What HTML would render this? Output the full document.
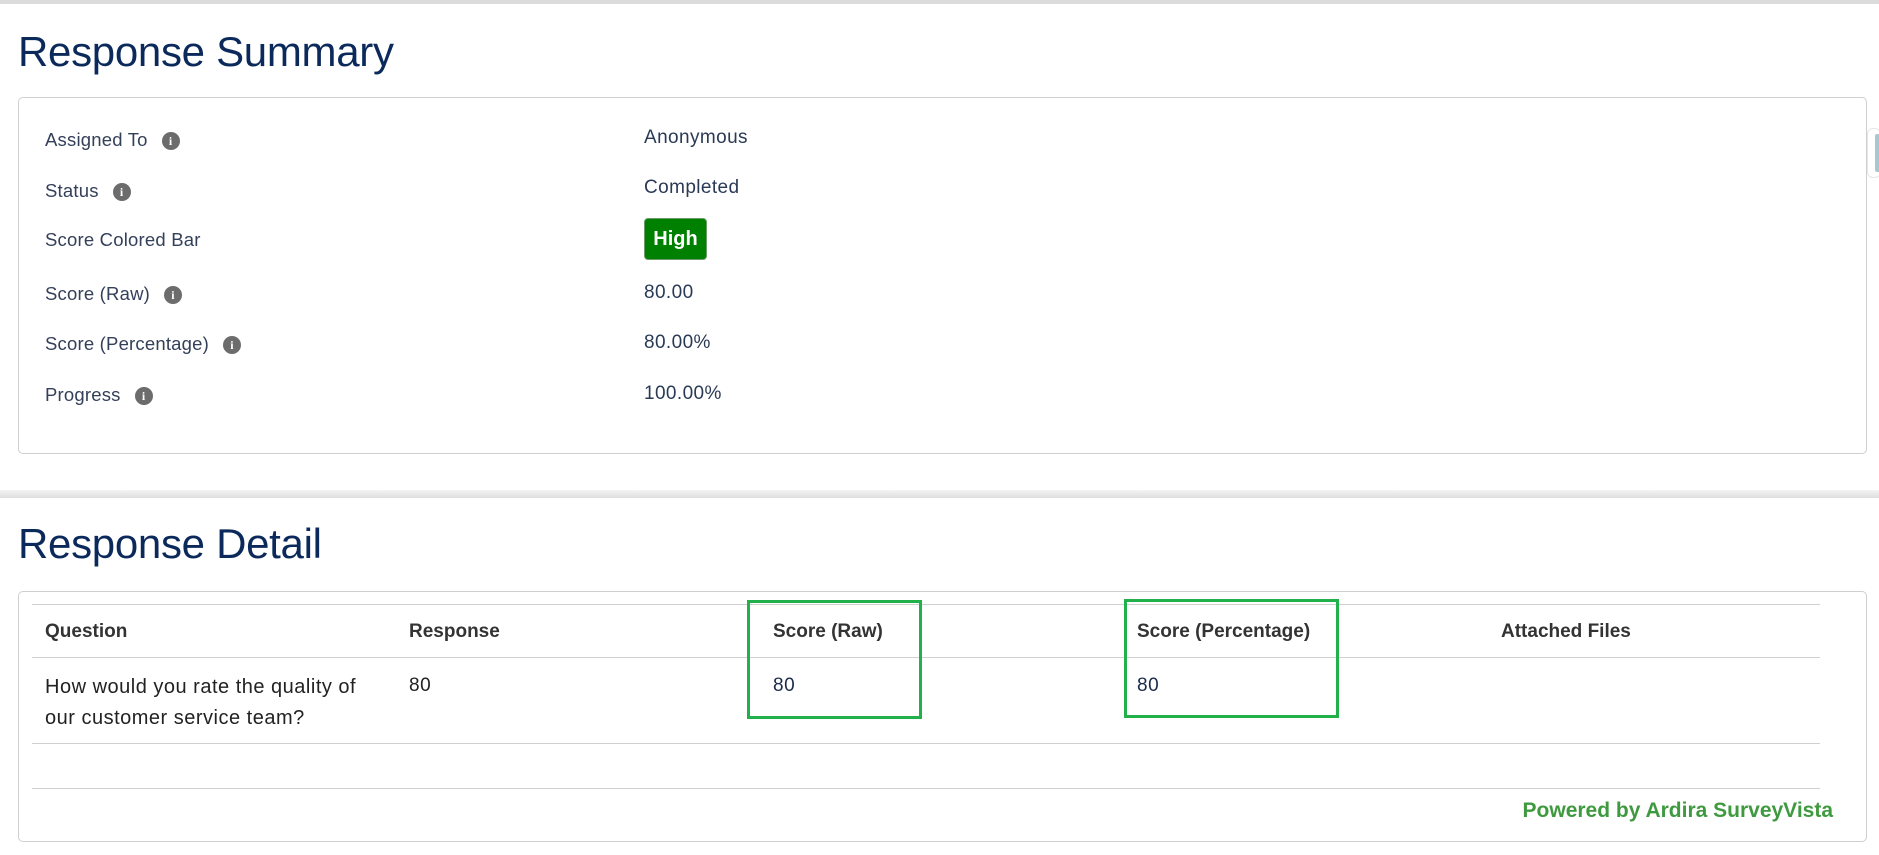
<!DOCTYPE html>
<html><head><meta charset="utf-8"><style>
*{margin:0;padding:0;box-sizing:border-box}
body{width:1879px;height:855px;background:#fff;font-family:"Liberation Sans",sans-serif;position:relative;overflow:hidden;color:#333}
.a{position:absolute;white-space:nowrap}
.t{font-size:42px;color:#0b2a5b;letter-spacing:-0.3px}
.card{position:absolute;border:1px solid #cfcfcf;border-radius:5px}
.l{font-size:18.5px;color:#34405a;letter-spacing:0.2px}
.v{font-size:19px;color:#2a3a55;letter-spacing:0.4px}
.i{display:inline-block;width:18px;height:18px;border-radius:50%;background:#6c6c6c;color:#fff;font-size:12px;font-weight:bold;text-align:center;line-height:18px;font-family:"Liberation Serif",serif;vertical-align:middle;margin-left:14px}
.h{position:absolute;height:1px;background:#d0d0d0;left:32px;width:1788px}
.th{font-size:19px;font-weight:bold;color:#333}
.td{font-size:19px;color:#222;letter-spacing:0.5px}
.g{position:absolute;border:3px solid #22b04b}
</style></head><body>
<div class="a" style="left:0;top:0;width:1879px;height:4px;background:#dcdcdc"></div>
<div class="a t" style="left:18px;top:28px">Response Summary</div>
<div class="card" style="left:18px;top:97px;width:1849px;height:357px"></div>
<div class="a l" style="left:45px;top:129px">Assigned To<span class="i">i</span></div>
<div class="a l" style="left:45px;top:180px">Status<span class="i">i</span></div>
<div class="a l" style="left:45px;top:229px">Score Colored Bar</div>
<div class="a l" style="left:45px;top:283px">Score (Raw)<span class="i">i</span></div>
<div class="a l" style="left:45px;top:333px">Score (Percentage)<span class="i">i</span></div>
<div class="a l" style="left:45px;top:384px">Progress<span class="i">i</span></div>
<div class="a v" style="left:644px;top:127px">Anonymous</div>
<div class="a v" style="left:644px;top:177px">Completed</div>
<div class="a" style="left:644px;top:218px;width:63px;height:42px;background:#008000;border:1px solid #6a9a6a;border-radius:4px;color:#fff;font-weight:bold;font-size:20px;text-align:center;line-height:40px">High</div>
<div class="a v" style="left:644px;top:282px">80.00</div>
<div class="a v" style="left:644px;top:332px">80.00%</div>
<div class="a v" style="left:644px;top:383px">100.00%</div>
<div class="a" style="left:1867px;top:128px;width:14px;height:50px;border:1px solid #e6e6e6;border-radius:6px;background:#fff"></div>
<div class="a" style="left:1875px;top:134px;width:6px;height:38px;background:#a8c8d0;border-radius:2px"></div>
<div class="a" style="left:0;top:490px;width:1879px;height:8px;background:linear-gradient(#f4f4f4,#dedede)"></div>
<div class="a t" style="left:18px;top:520px">Response Detail</div>
<div class="card" style="left:18px;top:591px;width:1849px;height:251px"></div>
<div class="h" style="top:604px"></div>
<div class="h" style="top:657px"></div>
<div class="h" style="top:743px"></div>
<div class="h" style="top:788px"></div>
<div class="a th" style="left:45px;top:621px">Question</div>
<div class="a th" style="left:409px;top:621px">Response</div>
<div class="a th" style="left:773px;top:621px">Score (Raw)</div>
<div class="a th" style="left:1137px;top:621px">Score (Percentage)</div>
<div class="a th" style="left:1501px;top:621px">Attached Files</div>
<div class="a td" style="left:45px;top:672px;line-height:31px;font-size:20px">How would you rate the quality of<br>our customer service team?</div>
<div class="a td" style="left:409px;top:675px">80</div>
<div class="a td" style="left:773px;top:675px;color:#1c2b4a">80</div>
<div class="a td" style="left:1137px;top:675px;color:#1c2b4a">80</div>
<div class="g" style="left:747px;top:600px;width:175px;height:119px"></div>
<div class="g" style="left:1124px;top:599px;width:215px;height:119px"></div>
<div class="a" style="right:46px;top:799px;font-size:21px;font-weight:bold;color:#3f9a3f">Powered by Ardira SurveyVista</div>
</body></html>
